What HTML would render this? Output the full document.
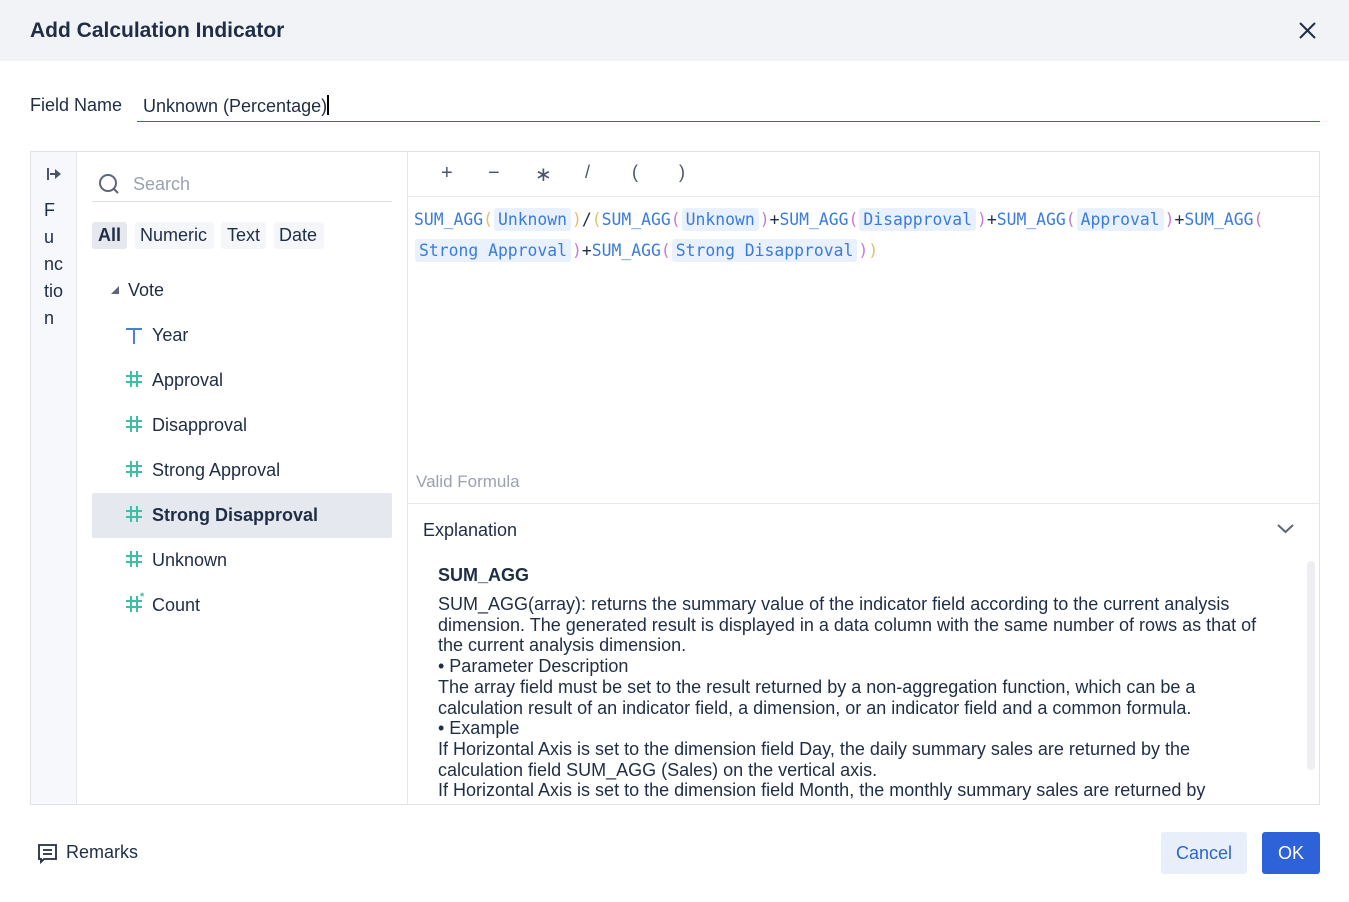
<!DOCTYPE html>
<html><head><meta charset="utf-8"><style>
*{box-sizing:border-box;margin:0;padding:0}
body{width:1349px;height:902px;background:#fff;font-family:"Liberation Sans",sans-serif;color:#1f2d45;position:relative;overflow:hidden}
.a{position:absolute}
.hdr{left:0;top:0;width:1349px;height:61px;background:#f1f3f7}
.mono{font-family:"DejaVu Sans Mono",monospace;font-size:16.4px;color:#3a7be0;white-space:pre}
.chip{background:#e8f1fd;border-radius:3px;padding:2px 4px;margin:0 1px}
.y{color:#e3bf65}.p{color:#c57ad8}.k{color:#1f2d45}
.item{left:125px;font-size:18px;color:#1f2d45}
.hash{display:inline-block;width:27px;position:relative;height:18px;vertical-align:-2px}
</style></head><body>
<svg width="0" height="0" style="position:absolute"><symbol id="h" viewBox="0 0 18 18"><path d="M6 1V17M12 1V17M1 6H17M1 12H17" stroke="#3bbfa6" stroke-width="2"/></symbol></svg>
<div class="a hdr"></div>
<div class="a" style="left:30px;top:19px;font-size:21px;font-weight:bold;color:#1f2d45">Add Calculation Indicator</div>
<svg class="a" style="left:1298px;top:21px" width="19" height="19" viewBox="0 0 19 19"><path d="M2 2L17 17M17 2L2 17" stroke="#1f2d45" stroke-width="2"/></svg>
<div class="a" style="left:30px;top:95px;font-size:18px">Field Name</div>
<div class="a" style="left:143px;top:95px;font-size:18px">Unknown (Percentage)<span style="display:inline-block;width:2px;height:20px;background:#000;vertical-align:-3px"></span></div>
<div class="a" style="left:137px;top:121px;width:1183px;height:1px;background:#2d62d8"></div>
<div class="a" style="left:30px;top:151px;width:1290px;height:654px;border:1px solid #dfe2e8"></div>
<div class="a" style="left:31px;top:152px;width:46px;height:652px;background:#f6f8fc;border-right:1px solid #e3e6ec"></div>
<svg class="a" style="left:46px;top:166px" width="18" height="16" viewBox="0 0 18 16"><path d="M2 2V14" stroke="#4a5568" stroke-width="2"/><path d="M4 8H10" stroke="#4a5568" stroke-width="2"/><path d="M9 3L15 8L9 13Z" fill="#4a5568"/></svg>
<div class="a" style="left:44px;top:197px;font-size:18px;line-height:27px;width:24px;word-break:break-all">F<br>u<br>nc<br>tio<br>n</div>
<div class="a" style="left:407px;top:152px;width:1px;height:652px;background:#e3e6ec"></div>
<svg class="a" style="left:97px;top:172px" width="24" height="24" viewBox="0 0 24 24"><circle cx="11" cy="11" r="8" fill="none" stroke="#5c6678" stroke-width="2"/><path d="M17 17L21 21" stroke="#5c6678" stroke-width="2"/></svg>
<div class="a" style="left:133px;top:174px;font-size:18px;color:#9aa2b1">Search</div>
<div class="a" style="left:92px;top:201px;width:300px;height:1px;background:#dcdfe5"></div>
<div class="a" style="left:92px;top:222px;width:35px;height:27px;background:#e5e8ee;border-radius:3px"></div>
<div class="a" style="left:135px;top:222px;width:79px;height:27px;background:#f4f6fa;border-radius:3px"></div>
<div class="a" style="left:221px;top:222px;width:45px;height:27px;background:#f4f6fa;border-radius:3px"></div>
<div class="a" style="left:274px;top:222px;width:50px;height:27px;background:#f4f6fa;border-radius:3px"></div>
<div class="a" style="left:98px;top:225px;font-size:18px;font-weight:bold">All</div>
<div class="a" style="left:140px;top:225px;font-size:18px">Numeric</div>
<div class="a" style="left:227px;top:225px;font-size:18px">Text</div>
<div class="a" style="left:279px;top:225px;font-size:18px">Date</div>
<svg class="a" style="left:111px;top:286px" width="9" height="9"><path d="M8 0V8H0Z" fill="#5c6678"/></svg>
<div class="a" style="left:128px;top:280px;font-size:18px">Vote</div>
<svg class="a" style="left:125px;top:327px" width="18" height="17"><path d="M1 2H17M9 2V17" stroke="#4a7fd8" stroke-width="2"/></svg>
<div class="a item" style="top:325px;left:152px">Year</div>
<div class="a item" style="top:370px"><span class="hash"><svg width="18" height="18"><use href="#h"/></svg></span>Approval</div>
<div class="a item" style="top:415px"><span class="hash"><svg width="18" height="18"><use href="#h"/></svg></span>Disapproval</div>
<div class="a item" style="top:460px"><span class="hash"><svg width="18" height="18"><use href="#h"/></svg></span>Strong Approval</div>
<div class="a" style="left:92px;top:493px;width:300px;height:45px;background:#e5e8ef;border-radius:2px"></div>
<div class="a item" style="top:505px;font-weight:bold"><span class="hash"><svg width="18" height="18"><use href="#h"/></svg></span>Strong Disapproval</div>
<div class="a item" style="top:550px"><span class="hash"><svg width="18" height="18"><use href="#h"/></svg></span>Unknown</div>
<div class="a item" style="top:595px"><span class="hash"><svg width="18" height="18"><use href="#h"/></svg><span style="position:absolute;left:15px;top:-4px;font-size:11px;color:#3bbfa6;font-weight:bold">*</span></span>Count</div>
<div class="a" style="left:408px;top:196px;width:911px;height:1px;background:#e6e8ed"></div>
<div class="a" style="left:441px;top:162px;font-size:20px;color:#4a5568">+</div>
<div class="a" style="left:488px;top:162px;font-size:20px;color:#4a5568">−</div>
<div class="a" style="left:535px;top:162px;font-size:20px;color:#4a5568">∗</div>
<div class="a" style="left:585px;top:162px;font-size:18px;color:#4a5568">/</div>
<div class="a" style="left:632px;top:162px;font-size:18px;color:#4a5568">(</div>
<div class="a" style="left:679px;top:162px;font-size:18px;color:#4a5568">)</div>
<div class="a mono" style="left:414px;top:204px;line-height:31px">SUM_AGG<span class="y">(</span><span class="chip">Unknown</span><span class="y">)</span><span class="k">/</span><span class="y">(</span>SUM_AGG<span class="p">(</span><span class="chip">Unknown</span><span class="p">)</span><span class="k">+</span>SUM_AGG<span class="p">(</span><span class="chip">Disapproval</span><span class="p">)</span><span class="k">+</span>SUM_AGG<span class="p">(</span><span class="chip">Approval</span><span class="p">)</span><span class="k">+</span>SUM_AGG<span class="p">(</span>
<span class="chip">Strong Approval</span><span class="p">)</span><span class="k">+</span>SUM_AGG<span class="p">(</span><span class="chip">Strong Disapproval</span><span class="p">)</span><span class="y">)</span></div>
<div class="a" style="left:416px;top:472px;font-size:17px;color:#9aa2b1">Valid Formula</div>
<div class="a" style="left:408px;top:503px;width:911px;height:1px;background:#e6e8ed"></div>
<div class="a" style="left:423px;top:520px;font-size:18px">Explanation</div>
<svg class="a" style="left:1276px;top:523px" width="19" height="12"><path d="M2 2L9.5 9L17 2" fill="none" stroke="#5c6678" stroke-width="2"/></svg>
<div class="a" style="left:1307px;top:561px;width:8px;height:209px;background:#eceef2;border-radius:4px"></div>
<div class="a" style="left:438px;top:565px;font-size:18px;font-weight:bold">SUM_AGG</div>
<div class="a" style="left:438px;top:594px;width:835px;height:209px;overflow:hidden;font-size:18px;line-height:20.7px">SUM_AGG(array): returns the summary value of the indicator field according to the current analysis dimension. The generated result is displayed in a data column with the same number of rows as that of the current analysis dimension.<br>• Parameter Description<br>The array field must be set to the result returned by a non-aggregation function, which can be a calculation result of an indicator field, a dimension, or an indicator field and a common formula.<br>• Example<br>If Horizontal Axis is set to the dimension field Day, the daily summary sales are returned by the calculation field SUM_AGG (Sales) on the vertical axis.<br>If Horizontal Axis is set to the dimension field Month, the monthly summary sales are returned by</div>
<svg class="a" style="left:37px;top:843px" width="22" height="22" viewBox="0 0 22 22"><path d="M2 2H19V16H7L4 19V16H2Z" fill="none" stroke="#1f2d45" stroke-width="1.8"/><path d="M6 7H15M6 11H15" stroke="#1f2d45" stroke-width="1.8"/></svg>
<div class="a" style="left:66px;top:842px;font-size:18px">Remarks</div>
<div class="a" style="left:1161px;top:832px;width:86px;height:42px;background:#e8effb;border-radius:3px;color:#2d62d8;font-size:18px;text-align:center;line-height:42px">Cancel</div>
<div class="a" style="left:1262px;top:832px;width:58px;height:42px;background:#2d62d8;border-radius:3px;color:#fff;font-size:18px;text-align:center;line-height:42px">OK</div>
</body></html>
